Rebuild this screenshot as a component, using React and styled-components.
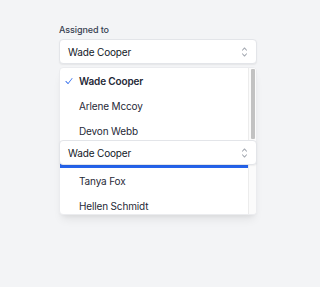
import React from "react";
import styled, { createGlobalStyle } from "styled-components";

const Global = createGlobalStyle`
  html, body { margin: 0; padding: 0; background: #f3f4f6; }
  body { font-family: Inter, "Noto Sans", sans-serif; color: #111827; }
`;

const Page = styled.div`
  width: 320px;
  height: 287px;
  box-sizing: border-box;
  padding: 23px 0 0 59px;
`;

const Field = styled.div`
  position: relative;
  width: 198px;
  display: flex;
  flex-direction: column;
`;

const Label = styled.label`
  font-size: 9px;
  line-height: 14px;
  letter-spacing: -0.1px;
  font-weight: 500;
  color: #374151;
  margin-bottom: 2px;
`;

const SelectButton = styled.button`
  position: ${(p) => (p.$overlay ? "absolute" : "relative")};
  top: ${(p) => (p.$overlay ? "117px" : "auto")};
  left: 0;
  width: 198px;
  height: 25px;
  box-sizing: border-box;
  display: flex;
  align-items: center;
  padding: 0 0 0 8px;
  background: #fff;
  border: 1px solid #e3e5e9;
  border-radius: 4px;
  box-shadow: 0 1px 1.5px rgba(0, 0, 0, 0.06);
  font-family: inherit;
  font-size: 10px;
  letter-spacing: -0.15px;
  color: #111827;
  text-align: left;
  z-index: ${(p) => (p.$overlay ? 2 : 0)};
`;

const IconWrap = styled.span`
  position: absolute;
  right: 5px;
  top: 50%;
  transform: translateY(-50%);
  display: flex;
  color: #a3a8b1;
`;

const ListPanel = styled.div`
  margin-top: 3px;
  height: 148px;
  box-sizing: border-box;
  display: flex;
  background: #fff;
  border: 1px solid #ebecef;
  border-radius: 4px;
  box-shadow: 0 7px 10px -3px rgba(0, 0, 0, 0.08), 0 3px 4px -2px rgba(0, 0, 0, 0.05);
  overflow: hidden;
`;

const Items = styled.ul`
  flex: 1;
  margin: 0;
  padding: 0;
  list-style: none;
  overflow: hidden;
`;

const Item = styled.li`
  position: relative;
  height: 25px;
  display: flex;
  align-items: center;
  padding-left: 19px;
  font-size: 10px;
  letter-spacing: -0.15px;
  font-weight: ${(p) => (p.$selected ? 600 : 400)};
  color: ${(p) => (p.$active ? "#fff" : "#1f2937")};
  background: ${(p) => (p.$active ? "#2563eb" : "transparent")};
`;

const Check = styled.span`
  position: absolute;
  left: 4px;
  top: 50%;
  transform: translateY(-50%);
  display: flex;
  color: #2563eb;
`;

const Track = styled.div`
  width: 8px;
  border-left: 1px solid #ececec;
  background: #fbfbfb;
  padding: 1px 0 0 2px;
  box-sizing: border-box;
`;

const Thumb = styled.div`
  width: 4px;
  height: 70px;
  background: #c2c2c2;
  border-radius: 1px;
`;

const ChevronUpDown = () => (
  <svg width="13" height="13" viewBox="0 0 20 20" fill="currentColor">
    <path
      fillRule="evenodd"
      d="M10 3a.75.75 0 01.55.24l3.25 3.5a.75.75 0 11-1.1 1.02L10 4.852 7.3 7.76a.75.75 0 01-1.1-1.02l3.25-3.5A.75.75 0 0110 3zm-3.76 9.2a.75.75 0 011.06.04l2.7 2.908 2.7-2.908a.75.75 0 111.1 1.02l-3.25 3.5a.75.75 0 01-1.1 0l-3.25-3.5a.75.75 0 01.04-1.06z"
      clipRule="evenodd"
    />
  </svg>
);

const CheckIcon = () => (
  <svg width="10" height="10" viewBox="0 0 20 20" fill="currentColor">
    <path
      fillRule="evenodd"
      d="M16.704 4.153a.75.75 0 01.143 1.052l-8 10.5a.75.75 0 01-1.127.075l-4.5-4.5a.75.75 0 011.06-1.06l3.894 3.893 7.48-9.817a.75.75 0 011.05-.143z"
      clipRule="evenodd"
    />
  </svg>
);

const people = [
  { id: 1, name: "Wade Cooper", selected: true },
  { id: 2, name: "Arlene Mccoy" },
  { id: 3, name: "Devon Webb" },
  { id: 4, name: "", active: true },
  { id: 5, name: "Tanya Fox" },
  { id: 6, name: "Hellen Schmidt" },
];

export default function App() {
  return (
    <>
      <Global />
      <Page>
        <Field>
          <Label>Assigned to</Label>
          <SelectButton>
            Wade Cooper
            <IconWrap>
              <ChevronUpDown />
            </IconWrap>
          </SelectButton>
          <ListPanel>
            <Items>
              {people.map((p) => (
                <Item key={p.id} $selected={p.selected} $active={p.active}>
                  {p.selected && (
                    <Check>
                      <CheckIcon />
                    </Check>
                  )}
                  {p.name}
                </Item>
              ))}
            </Items>
            <Track>
              <Thumb />
            </Track>
          </ListPanel>
          <SelectButton $overlay>
            Wade Cooper
            <IconWrap>
              <ChevronUpDown />
            </IconWrap>
          </SelectButton>
        </Field>
      </Page>
    </>
  );
}
